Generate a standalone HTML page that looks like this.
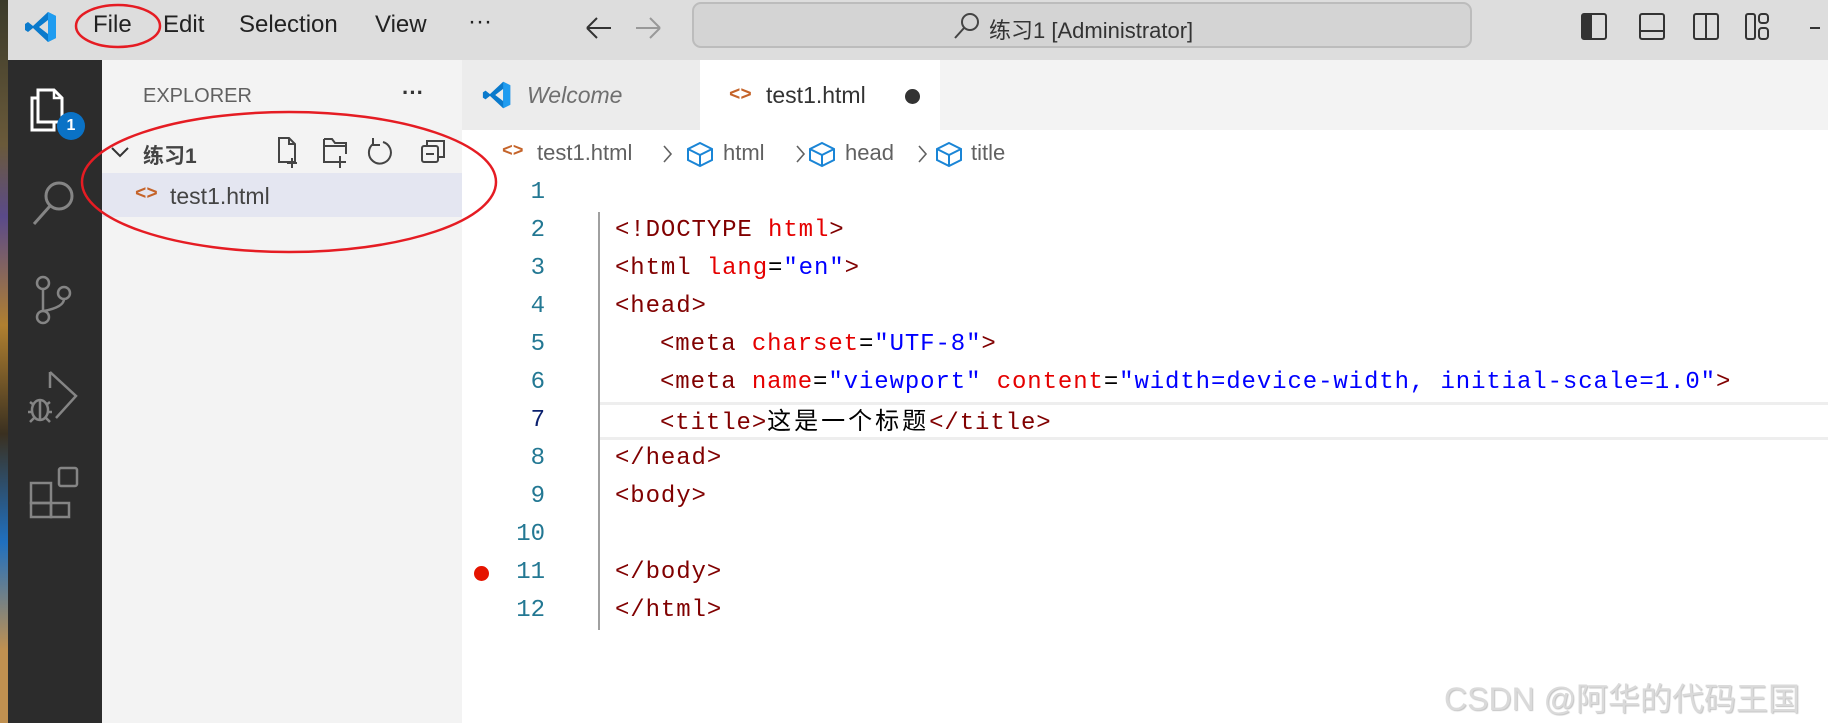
<!DOCTYPE html>
<html><head><meta charset="utf-8"><style>
*{margin:0;padding:0;box-sizing:border-box}
body{width:1828px;height:723px;overflow:hidden;background:#fff;position:relative;font-family:"Liberation Sans","Noto Sans CJK SC",sans-serif}
.a{position:absolute}
.mono{font-family:"Liberation Mono","Noto Sans CJK SC",monospace;font-size:24px;letter-spacing:0.9px;white-space:pre}
.t{color:#800000}.at{color:#e50000}.v{color:#0000ff}.k{color:#000}
.ln{position:absolute;width:60px;left:485px;text-align:right;color:#237893;font-family:"Liberation Mono",monospace;font-size:24px}
.menu{position:absolute;top:11px;font-size:24px;color:#222}
</style></head><body>
<div class="a" style="left:0;top:0;width:8px;height:723px;background:linear-gradient(#3a3a2a,#6a5a3a 20%,#5a4a8a 30%,#b08030 45%,#3a3020 60%,#2070c0 75%,#c09050 90%)"></div>
<div class="a" style="left:8px;top:0;width:1820px;height:60px;background:#dddddd"></div>
<svg class="a" style="left:24px;top:10px" width="34" height="34" viewBox="0 0 34 34"><path d="M24 2 L32 6 V28 L24 32 L9 18 L4 22 L1 20 V14 L4 12 L9 16 Z M24 10 L15 17 L24 24 Z" fill="#0a7acc"/><path d="M24 2 L32 6 V28 L24 32 Z" fill="#1f9cf0"/></svg>
<div class="menu" style="left:93px">File</div>
<div class="menu" style="left:163px">Edit</div>
<div class="menu" style="left:239px">Selection</div>
<div class="menu" style="left:375px">View</div>
<div class="menu" style="left:468px;top:8px">···</div>
<svg class="a" style="left:584px;top:15px" width="80" height="26"><path d="M3 13 H27 M3 13 L13 3 M3 13 L13 23" stroke="#333" stroke-width="2" fill="none"/><path d="M52 13 H76 M76 13 L66 3 M76 13 L66 23" stroke="#999" stroke-width="2" fill="none"/></svg>
<div class="a" style="left:692px;top:2px;width:780px;height:46px;background:#d4d4d4;border:2px solid #bcbcbc;border-radius:9px"></div>
<svg class="a" style="left:952px;top:12px" width="30" height="28"><circle cx="18" cy="10" r="8" stroke="#444" stroke-width="2" fill="none"/><path d="M12 16 L3 26" stroke="#444" stroke-width="2"/></svg>
<div class="a" style="left:989px;top:13px;font-size:22px;color:#333">练习1 [Administrator]</div>
<svg class="a" style="left:1580px;top:12px" width="240" height="30"><rect x="2" y="2" width="24" height="25" rx="2" stroke="#333" stroke-width="2" fill="none"/><rect x="2" y="2" width="10" height="25" fill="#333"/><rect x="60" y="2" width="24" height="25" rx="2" stroke="#333" stroke-width="2" fill="none"/><path d="M60 19 H84" stroke="#333" stroke-width="2"/><rect x="114" y="2" width="24" height="25" rx="2" stroke="#333" stroke-width="2" fill="none"/><path d="M126 2 V27" stroke="#333" stroke-width="2"/><rect x="166" y="2" width="9" height="25" rx="2" stroke="#333" stroke-width="2" fill="none"/><rect x="179" y="2" width="9" height="9" rx="3" stroke="#333" stroke-width="2" fill="none"/><rect x="179" y="16" width="9" height="11" rx="3" stroke="#333" stroke-width="2" fill="none"/><path d="M230 16 H240" stroke="#333" stroke-width="2"/></svg>
<div class="a" style="left:8px;top:60px;width:94px;height:663px;background:#2c2c2c"></div>
<svg class="a" style="left:28px;top:82px" width="50" height="50"><path d="M10 8 H26 L34 16 V40 H10 Z" stroke="#fff" stroke-width="3" fill="#2c2c2c"/><path d="M26 8 V16 H34" stroke="#fff" stroke-width="2.5" fill="none"/><path d="M10 16 H4 V48 H26 V40" stroke="#fff" stroke-width="3" fill="none"/></svg>
<div class="a" style="left:57px;top:112px;width:28px;height:28px;border-radius:50%;background:#0a72c6;color:#fff;font-size:16px;font-weight:bold;text-align:center;line-height:28px">1</div>
<svg class="a" style="left:30px;top:178px" width="50" height="50"><circle cx="29" cy="18" r="13" stroke="#858585" stroke-width="3" fill="none"/><path d="M20 28 L4 46" stroke="#858585" stroke-width="3"/></svg>
<svg class="a" style="left:30px;top:275px" width="50" height="50"><circle cx="13" cy="8" r="6" stroke="#858585" stroke-width="2.5" fill="none"/><circle cx="13" cy="42" r="6" stroke="#858585" stroke-width="2.5" fill="none"/><circle cx="34" cy="18" r="6" stroke="#858585" stroke-width="2.5" fill="none"/><path d="M13 14 V36 M34 24 Q34 32 14 36" stroke="#858585" stroke-width="2.5" fill="none"/></svg>
<svg class="a" style="left:26px;top:370px" width="56" height="56"><path d="M24 2 L50 26 L30 48" stroke="#858585" stroke-width="2.5" fill="none"/><path d="M24 2 V18" stroke="#858585" stroke-width="2.5"/><ellipse cx="14" cy="40" rx="8" ry="10" stroke="#858585" stroke-width="2.5" fill="none"/><path d="M4 32 L8 35 M24 32 L20 35 M2 42 H6 M22 42 H26 M4 52 L8 48 M24 52 L20 48 M14 30 V50" stroke="#858585" stroke-width="2.5"/></svg>
<svg class="a" style="left:28px;top:465px" width="54" height="54"><rect x="3" y="18" width="20" height="20" stroke="#858585" stroke-width="2.5" fill="none"/><rect x="3" y="38" width="20" height="14" stroke="#858585" stroke-width="2.5" fill="none"/><rect x="23" y="38" width="18" height="14" stroke="#858585" stroke-width="2.5" fill="none"/><rect x="31" y="3" width="18" height="18" rx="2" stroke="#858585" stroke-width="2.5" fill="none"/></svg>
<div class="a" style="left:102px;top:60px;width:360px;height:663px;background:#f3f3f3"></div>
<div class="a" style="left:143px;top:85px;font-size:20px;color:#616161">EXPLORER</div>
<div class="a" style="left:402px;top:80px;font-size:22px;color:#333;font-weight:bold">···</div>
<svg class="a" style="left:110px;top:145px" width="20" height="14"><path d="M2 3 L10 11 L18 3" stroke="#333" stroke-width="2" fill="none"/></svg>
<div class="a" style="left:143px;top:140px;font-size:21px;font-weight:bold;color:#444">练习1</div>
<svg class="a" style="left:276px;top:136px" width="180" height="34"><path d="M3 2 H13 L19 8 V26 H3 Z M13 2 V8 H19" stroke="#444" stroke-width="2" fill="none"/><path d="M16 22 V32 M11 27 H21" stroke="#444" stroke-width="2"/><path d="M48 3 H56 L59 7 H70 V18 M48 3 V26 H58 M48 10 H70" stroke="#444" stroke-width="2" fill="none"/><path d="M64 20 V32 M58 26 H70" stroke="#444" stroke-width="2"/><path d="M107 6 A11 11 0 1 1 97 8" stroke="#444" stroke-width="2" fill="none"/><path d="M97 2 V9 H104" stroke="#444" stroke-width="2" fill="none"/><rect x="146" y="10" width="16" height="16" rx="2" stroke="#444" stroke-width="2" fill="none"/><path d="M151 10 V5 H168 V21 H162 M150 18 H158" stroke="#444" stroke-width="2" fill="none"/></svg>
<div class="a" style="left:102px;top:173px;width:360px;height:44px;background:#e4e6f1"></div>
<div class="a" style="left:135px;top:183px;font-size:19px;color:#c5642a;font-family:'Liberation Mono',monospace;font-weight:bold">&lt;&gt;</div>
<div class="a" style="left:170px;top:183px;font-size:23px;color:#444">test1.html</div>
<div class="a" style="left:462px;top:60px;width:1366px;height:70px;background:#f3f3f3"></div>
<div class="a" style="left:462px;top:60px;width:238px;height:70px;background:#ececec"></div>
<svg class="a" style="left:482px;top:80px" width="30" height="30" viewBox="0 0 34 34"><path d="M24 2 L32 6 V28 L24 32 L9 18 L4 22 L1 20 V14 L4 12 L9 16 Z M24 10 L15 17 L24 24 Z" fill="#0a7acc"/><path d="M24 2 L32 6 V28 L24 32 Z" fill="#1f9cf0"/></svg>
<div class="a" style="left:527px;top:82px;font-size:23px;font-style:italic;color:#6f6f6f">Welcome</div>
<div class="a" style="left:700px;top:60px;width:240px;height:70px;background:#fff"></div>
<div class="a" style="left:729px;top:84px;font-size:19px;color:#c5642a;font-family:'Liberation Mono',monospace;font-weight:bold">&lt;&gt;</div>
<div class="a" style="left:766px;top:82px;font-size:23px;color:#333">test1.html</div>
<div class="a" style="left:905px;top:89px;width:15px;height:15px;border-radius:50%;background:#333"></div>
<div class="a" style="left:502px;top:142px;font-size:18px;color:#c5642a;font-family:'Liberation Mono',monospace;font-weight:bold">&lt;&gt;</div>
<div class="a" style="left:537px;top:140px;font-size:22px;color:#616161;white-space:nowrap">test1.html</div>
<svg class="a" style="left:660px;top:140px" width="330" height="28"><g stroke="#616161" stroke-width="1.6" fill="none"><path d="M4 6 L11 14 L4 22"/><path d="M137 6 L144 14 L137 22"/><path d="M259 6 L266 14 L259 22"/></g><g stroke="#1a85d6" stroke-width="2" fill="none"><path d="M40 3 L52 9 V20 L40 26 L28 20 V9 Z M28 9 L40 15 L52 9 M40 15 V26"/><path d="M162 3 L174 9 V20 L162 26 L150 20 V9 Z M150 9 L162 15 L174 9 M162 15 V26"/><path d="M289 3 L301 9 V20 L289 26 L277 20 V9 Z M277 9 L289 15 L301 9 M289 15 V26"/></g></svg>
<div class="a" style="left:723px;top:140px;font-size:22px;color:#616161">html</div>
<div class="a" style="left:845px;top:140px;font-size:22px;color:#616161">head</div>
<div class="a" style="left:971px;top:140px;font-size:22px;color:#616161">title</div>
<div class="a" style="left:600px;top:402px;width:1228px;height:38px;border-top:3px solid #eeeeee;border-bottom:3px solid #eeeeee"></div>
<div class="a" style="left:598px;top:212px;width:2px;height:418px;background:#a0a0a0"></div>
<div class="a" style="left:474px;top:566px;width:15px;height:15px;border-radius:50%;background:#e51400"></div>
<div class="ln" style="top:179px">1</div>
<div class="ln" style="top:217px">2</div>
<div class="ln" style="top:255px">3</div>
<div class="ln" style="top:293px">4</div>
<div class="ln" style="top:331px">5</div>
<div class="ln" style="top:369px">6</div>
<div class="ln" style="top:407px;color:#0b216f">7</div>
<div class="ln" style="top:445px">8</div>
<div class="ln" style="top:483px">9</div>
<div class="ln" style="top:521px">10</div>
<div class="ln" style="top:559px">11</div>
<div class="ln" style="top:597px">12</div>
<div class="a mono" style="left:615px;top:217px"><span class="t">&lt;!DOCTYPE</span> <span class="at">html</span><span class="t">&gt;</span></div>
<div class="a mono" style="left:615px;top:255px"><span class="t">&lt;html</span> <span class="at">lang</span><span class="k">=</span><span class="v">"en"</span><span class="t">&gt;</span></div>
<div class="a mono" style="left:615px;top:293px"><span class="t">&lt;head&gt;</span></div>
<div class="a mono" style="left:660px;top:331px"><span class="t">&lt;meta</span> <span class="at">charset</span><span class="k">=</span><span class="v">"UTF-8"</span><span class="t">&gt;</span></div>
<div class="a mono" style="left:660px;top:369px"><span class="t">&lt;meta</span> <span class="at">name</span><span class="k">=</span><span class="v">"viewport"</span> <span class="at">content</span><span class="k">=</span><span class="v">"width=device-width, initial-scale=1.0"</span><span class="t">&gt;</span></div>
<div class="a mono" style="left:660px;top:405px"><span class="t">&lt;title&gt;</span><span class="k" style="letter-spacing:3px;font-family:'Noto Sans CJK SC',sans-serif;font-size:24px;line-height:28px">这是一个标题</span><span class="t">&lt;/title&gt;</span></div>
<div class="a mono" style="left:615px;top:445px"><span class="t">&lt;/head&gt;</span></div>
<div class="a mono" style="left:615px;top:483px"><span class="t">&lt;body&gt;</span></div>
<div class="a mono" style="left:615px;top:559px"><span class="t">&lt;/body&gt;</span></div>
<div class="a mono" style="left:615px;top:597px"><span class="t">&lt;/html&gt;</span></div>
<div class="a" style="left:1444px;top:674px;font-size:32px;color:#dadada;white-space:nowrap;text-shadow:1px 1px 1px #c4c4c4">CSDN @阿华的代码王国</div>
<svg class="a" style="left:0;top:0" width="1828" height="723"><ellipse cx="118" cy="26" rx="42" ry="21" stroke="#e51c23" stroke-width="2.5" fill="none"/><ellipse cx="289" cy="182" rx="207" ry="70" stroke="#e51c23" stroke-width="2.5" fill="none"/></svg>
</body></html>
